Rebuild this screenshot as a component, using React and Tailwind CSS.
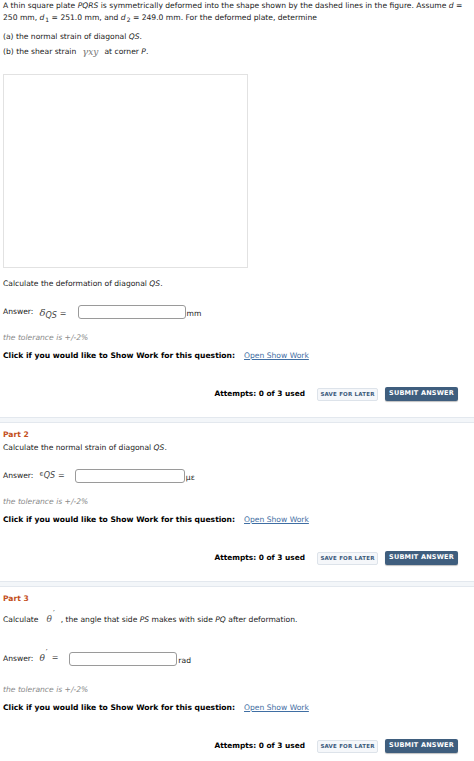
import React from "react";

const font = "font-['Verdana','DejaVu_Sans',sans-serif]";

const AttemptsRow = ({ className }) => (
  <div className={`flex items-center justify-end pr-[13px] ${className}`}>
    <span className="font-bold text-[7.4px] text-black">Attempts: 0 of 3 used</span>
    <button className="ml-[12px] h-[13px] w-[61px] rounded-[2px] border border-[#dde3ea] bg-[#f5f7fa] text-[5.5px] font-bold tracking-[0.2px] text-[#3b5a7a]">
      SAVE FOR LATER
    </button>
    <button className="ml-[7px] h-[14px] w-[73px] rounded-[2px] bg-[#3f5e7e] text-[6.5px] font-bold tracking-[0.2px] text-white shadow-[0_1px_1px_rgba(0,0,0,0.25)]">
      SUBMIT ANSWER
    </button>
  </div>
);

const ShowWork = ({ className }) => (
  <div className={`leading-[12px] ${className}`}>
    <span className="font-bold text-black">Click if you would like to Show Work for this question:</span>
    <a href="#" className="ml-[9px] text-[#3f6ea3] underline">
      Open Show Work
    </a>
  </div>
);

const Tolerance = ({ className }) => (
  <p className={`leading-[12px] italic text-[#8a8a8a] ${className}`}>the tolerance is +/-2%</p>
);

const Separator = ({ className }) => (
  <div className={`-mx-[3px] h-[6px] border-y border-[#e3e8ee] bg-[#f3f6f9] ${className}`} />
);

const AnswerRow = ({ symbol, unit, inputWidth, className }) => (
  <div className={`flex h-[16px] items-center ${className}`}>
    <span>Answer:</span>
    {symbol}
    <div className={`h-[14px] rounded-[3px] border border-[#9a9a9a] bg-white ${inputWidth}`} />
    <span className="ml-[1px] self-end leading-[12px]">{unit}</span>
  </div>
);

const Sub = ({ children }) => (
  <span className="relative top-[2px] ml-[1px] text-[6px] leading-none">{children}</span>
);

export default function App() {
  return (
    <div className={`min-h-[761px] w-[474px] bg-white px-[3px] text-[7.6px] text-[#222] ${font}`}>
      <p className="leading-[12px]">
        A thin square plate <i>PQRS</i> is symmetrically deformed into the shape shown by the dashed lines in the figure. Assume <i>d</i> = 250 mm, <i>d</i>
        <Sub>1</Sub> = 251.0 mm, and <i>d</i>
        <Sub>2</Sub> = 249.0 mm. For the deformed plate, determine
      </p>
      <p className="mt-[7px] leading-[12px]">
        (a) the normal strain of diagonal <i>QS</i>.
      </p>
      <p className="mt-[3px] flex h-[12px] items-center">
        <span>(b) the shear strain</span>
        <span className="mx-[6px] text-[10px] italic text-[#777] font-['DejaVu_Serif',serif]">
          γ<span className="text-[9px]">xy</span>
        </span>
        <span>
          at corner <i>P</i>.
        </span>
      </p>
      <div className="mt-[16px] h-[194px] w-[245px] border border-[#e2e2e2] bg-white" />

      <p className="mt-[10px] leading-[12px]">
        Calculate the deformation of diagonal <i>QS</i>.
      </p>
      <AnswerRow
        className="mt-[14px]"
        inputWidth="w-[108px]"
        unit="mm"
        symbol={
          <span className="ml-[6px] mr-[11px] flex items-baseline text-[#444]">
            <span className="text-[10px] italic font-['DejaVu_Serif',serif]">δ</span>
            <span className="relative top-[2px] text-[8px] italic">QS</span>
            <span className="ml-[3px] text-[8px]">=</span>
          </span>
        }
      />
      <Tolerance className="mt-[12px]" />
      <ShowWork className="mt-[6px]" />
      <AttemptsRow className="mt-[25px]" />
      <Separator className="mt-[16px]" />

      <p className="mt-[6px] font-bold leading-[12px] text-[#c4501c]">Part 2</p>
      <p className="mt-[1px] leading-[12px]">
        Calculate the normal strain of diagonal <i>QS</i>.
      </p>
      <AnswerRow
        className="mt-[14px]"
        inputWidth="w-[110px]"
        unit="με"
        symbol={
          <span className="ml-[6px] mr-[10px] flex items-baseline text-[#444]">
            <span className="relative -top-[2px] text-[7px]">ϵ</span>
            <span className="text-[8px] italic">QS</span>
            <span className="ml-[3px] text-[8px]">=</span>
          </span>
        }
      />
      <Tolerance className="mt-[12px]" />
      <ShowWork className="mt-[6px]" />
      <AttemptsRow className="mt-[25px]" />
      <Separator className="mt-[16px]" />

      <p className="mt-[6px] font-bold leading-[12px] text-[#c4501c]">Part 3</p>
      <p className="mt-[9px] flex h-[12px] items-center">
        <span>Calculate</span>
        <span className="ml-[8px] mr-[6px] flex items-start text-[#555]">
          <span className="text-[9px] italic font-['DejaVu_Serif',serif]">θ</span>
          <span className="relative -top-[4px] ml-[1px] text-[8px]">′</span>
        </span>
        <span>
          , the angle that side <i>PS</i> makes with side <i>PQ</i> after deformation.
        </span>
      </p>
      <AnswerRow
        className="mt-[25px]"
        inputWidth="w-[108px]"
        unit="rad"
        symbol={
          <span className="ml-[6px] mr-[11px] flex items-start text-[#444]">
            <span className="text-[9px] italic font-['DejaVu_Serif',serif]">θ</span>
            <span className="relative -top-[4px] ml-[1px] text-[8px]">′</span>
            <span className="ml-[4px] text-[8px]">=</span>
          </span>
        }
      />
      <Tolerance className="mt-[17px]" />
      <ShowWork className="mt-[6px]" />
      <AttemptsRow className="mt-[25px]" />
    </div>
  );
}
